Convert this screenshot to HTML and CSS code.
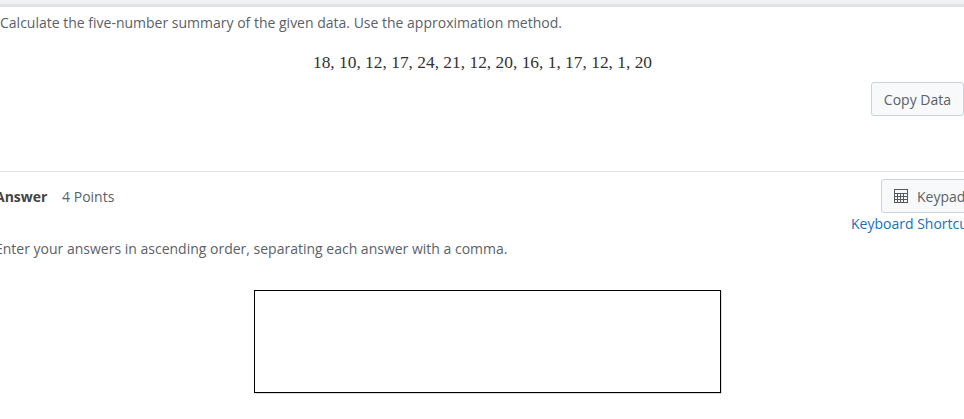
FILE: index.html
```html
<!DOCTYPE html>
<html lang="en">
<head>
  <meta charset="UTF-8" />
  <title>Five-number summary</title>
  <link rel="stylesheet" href="styles.css">
</head>
<body>
  <div class="top-bar"></div>

  <div class="question">
    <p class="prompt">Calculate the five-number summary of the given data. Use the approximation method.</p>
    <p class="data">18, 10, 12, 17, 24, 21, 12, 20, 16, 1, 17, 12, 1, 20</p>
    <div class="copy-row">
      <button class="btn">Copy Data</button>
    </div>
  </div>

  <div class="answer">
    <div class="answer-head">
      <div class="answer-title">
        <span class="answer-label">Answer</span>
        <span class="points">4 Points</span>
      </div>
      <div class="tools">
        <button class="btn btn-keypad">
          <svg class="calc" width="14" height="14" viewBox="0 0 14 14">
            <rect x="0.5" y="0.5" width="13" height="13" fill="none" stroke="#555a60"/>
            <path d="M1 4.5h12M1 7.5h12M1 10.5h12M3.5 5v8M6.5 5v8M9.5 5v8" stroke="#555a60" stroke-width="1" fill="none"/>
          </svg>
          Keypad
        </button>
        <a class="shortcuts" href="#">Keyboard Shortcuts</a>
      </div>
    </div>
    <p class="hint">Enter your answers in ascending order, separating each answer with a comma.</p>
    <div class="answer-box"></div>
  </div>
</body>
</html>
```

FILE: styles.css
```css
html, body {
  overflow: hidden;
}

body {
  margin: 0;
  height: 419px;
  background: #fff;
  font-family: "Open Sans", sans-serif;
  font-size: 14px;
  color: #5b6168;
}

.top-bar {
  height: 4px;
  background: #f0f1f3;
  border-bottom: 3px solid #e3e3e3;
}

.question {
  height: 164px;
  border-bottom: 1px solid #e3e3e3;
}

.prompt {
  margin: 0;
  padding-top: 6px;
  line-height: 20px;
}

.data {
  margin: 18px 0 0;
  padding-left: 1px;
  font-family: "Liberation Serif", serif;
  font-size: 17.4px;
  line-height: 22px;
  text-align: center;
  color: #333;
}

.copy-row {
  display: flex;
  justify-content: flex-end;
  margin-top: 9px;
}

.btn {
  height: 34px;
  padding: 0 12px;
  font-family: inherit;
  font-size: 14px;
  color: #5b6168;
  background: #f7f9fb;
  border: 1px solid #c9d3da;
  border-radius: 3px;
}

.answer {
  margin-left: -5px;
  width: 1003px;
}

.answer-head {
  display: flex;
  justify-content: space-between;
  padding-top: 7px;
}

.answer-title {
  padding-top: 8px;
  line-height: 20px;
}

.answer-label {
  font-weight: 700;
  color: #444;
  margin-right: 11px;
}

.tools {
  display: flex;
  flex-direction: column;
  align-items: flex-start;
  width: 117px;
  white-space: nowrap;
}

.btn-keypad {
  display: flex;
  align-items: center;
  gap: 9px;
  width: 100px;
  padding: 0 12px;
}

.calc {
  flex: none;
}

.shortcuts {
  margin-top: 1px;
  margin-left: -30px;
  line-height: 20px;
  color: #1a6fb5;
  text-decoration: none;
}

.hint {
  margin: 5px 0 0;
  line-height: 20px;
}

.answer-box {
  box-sizing: border-box;
  width: 467px;
  height: 103px;
  margin: 31px 0 0 259px;
  border: 1px solid #000;
  box-shadow: 1px 1px 0 #ddd;
}
```
